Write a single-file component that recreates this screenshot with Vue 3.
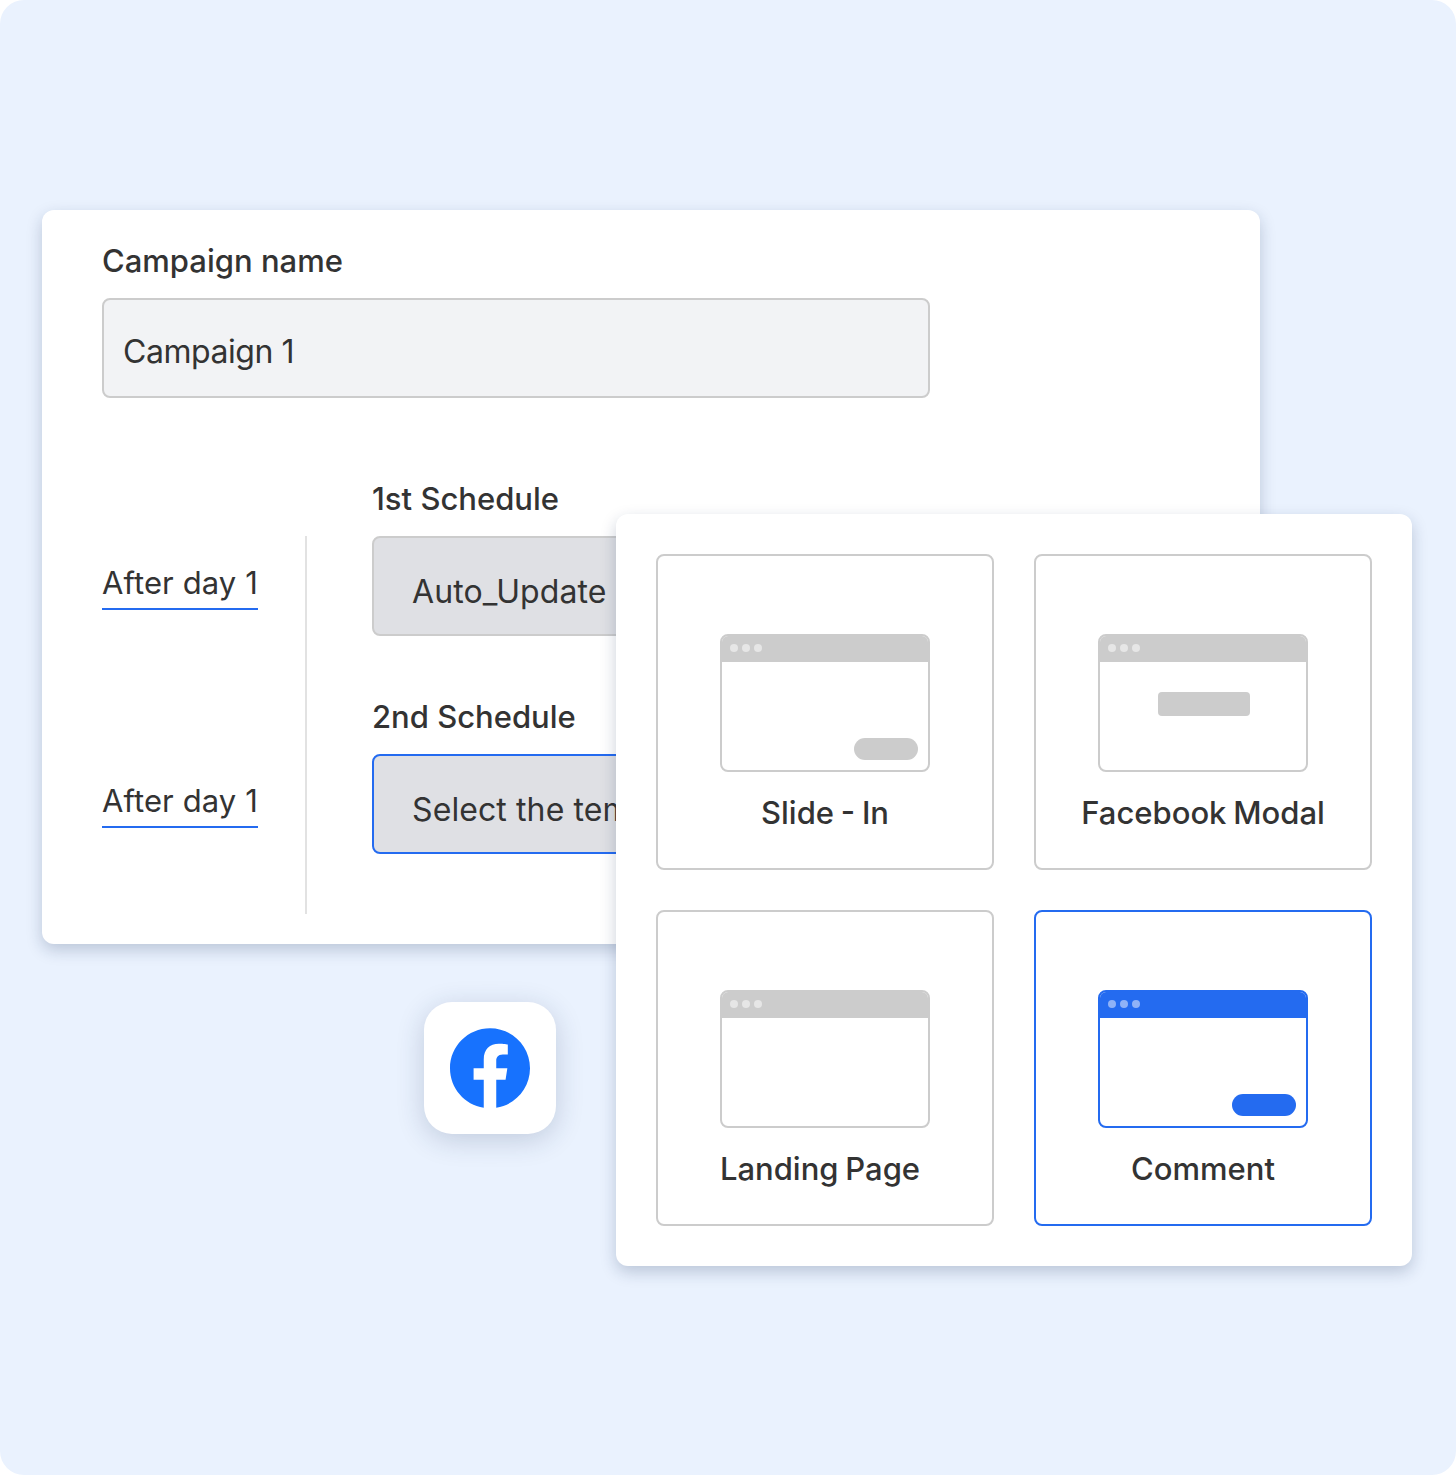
<script setup>
const schedules = [
  { id: 1, after: 'After day 1', title: '1st Schedule', value: 'Auto_Update', active: false },
  { id: 2, after: 'After day 1', title: '2nd Schedule', value: 'Select the template', active: true },
];

const types = [
  { name: 'Slide - In', kind: 'pill' },
  { name: 'Facebook Modal', kind: 'modal' },
  { name: 'Landing Page', kind: 'none', shift: true },
  { name: 'Comment', kind: 'pill', active: true },
];
</script>

<template>
  <div class="page">
    <div class="campaign">
      <div class="label">Campaign name</div>
      <div class="field field--light">Campaign 1</div>

      <div class="schedules">
        <div class="days">
          <div v-for="s in schedules" :key="s.id" class="day-row">
            <span class="day">{{ s.after }}</span>
          </div>
        </div>
        <div class="forms">
          <div v-for="s in schedules" :key="s.id" class="form">
            <div class="label">{{ s.title }}</div>
            <div class="field field--grey" :class="{ 'field--active': s.active }">{{ s.value }}</div>
          </div>
        </div>
      </div>

      <div class="types">
        <div v-for="t in types" :key="t.name" class="type" :class="{ 'type--active': t.active }">
          <div class="window">
            <div class="window__bar">
              <i></i><i></i><i></i>
            </div>
            <div class="window__body">
              <div v-if="t.kind === 'pill'" class="window__pill"></div>
              <div v-if="t.kind === 'modal'" class="window__modal"></div>
            </div>
          </div>
          <div class="type__name" :class="{ 'type__name--shift': t.shift }">{{ t.name }}</div>
        </div>
      </div>

      <div class="fb">
        <svg width="80" height="80" viewBox="0 0 24 24">
          <path fill="#1772fe" d="M24 12.073c0-6.627-5.373-12-12-12s-12 5.373-12 12c0 5.99 4.388 10.954 10.125 11.854v-8.385H7.078v-3.47h3.047V9.43c0-3.007 1.792-4.669 4.533-4.669 1.312 0 2.686.235 2.686.235v2.953H15.83c-1.491 0-1.956.925-1.956 1.874v2.25h3.328l-.532 3.47h-2.796v8.385C19.612 23.027 24 18.062 24 12.073z" />
        </svg>
      </div>
    </div>
  </div>
</template>

<style>
html, body {
  background: #fff;
}
</style>

<style scoped>
* {
  box-sizing: border-box;
}

.page {
  width: 1456px;
  height: 1475px;
  padding: 210px 0 0 42px;
  background: #eaf2fe;
  border-radius: 24px;
  font-family: Inter, "Open Sans", sans-serif;
  color: #333;
  overflow: hidden;
}

.campaign {
  position: relative;
  width: 1218px;
  height: 734px;
  padding: 32px 60px 0;
  background: #fff;
  border-radius: 12px;
  box-shadow: 0 6px 16px rgba(20, 40, 80, 0.22);
}

.label {
  height: 38px;
  font-size: 31px;
  line-height: 38px;
  font-weight: 500;
}

.field {
  height: 100px;
  margin-top: 18px;
  padding: 6px 20px 0 19px;
  display: flex;
  align-items: center;
  border: 2px solid #ccc;
  border-radius: 8px;
  font-size: 32px;
  white-space: nowrap;
  overflow: hidden;
}

.field--light {
  width: 828px;
  background: #f2f3f5;
  letter-spacing: -0.45px;
}

.field--grey {
  width: 500px;
  padding-top: 10px;
  padding-left: 38px;
  background: #dfe0e4;
  letter-spacing: 0.1px;
}

.field--active {
  border-color: #246bf0;
}

.schedules {
  display: flex;
  margin-top: 138px;
}

.days {
  width: 205px;
  height: 378px;
  padding-right: 47px;
  border-right: 2px solid #e2e2e2;
}

.day-row {
  height: 218px;
  padding-top: 26px;
}

.day {
  display: inline-block;
  height: 48px;
  font-size: 31px;
  line-height: 42px;
  letter-spacing: 0.1px;
  border-bottom: 2px solid #246bf0;
}

.forms {
  margin-left: 65px;
  margin-top: -56px;
  display: flex;
  flex-direction: column;
}

.form {
  height: 218px;
}

.types {
  position: absolute;
  left: 574px;
  top: 304px;
  width: 796px;
  height: 752px;
  padding: 40px;
  display: grid;
  grid-template-columns: 338px 338px;
  grid-template-rows: 316px 316px;
  gap: 40px;
  background: #fff;
  border-radius: 12px;
  box-shadow: 0 6px 16px rgba(20, 40, 80, 0.22);
}

.type {
  display: flex;
  flex-direction: column;
  align-items: center;
  padding-top: 78px;
  border: 2px solid #ccc;
  border-radius: 8px;
  --accent: #ccc;
  --dot: #e6e6e6;
}

.type--active {
  border-color: #246bf0;
  --accent: #246bf0;
  --dot: #8fb2f7;
}

.window {
  width: 210px;
  height: 138px;
  border: 2px solid var(--accent);
  border-radius: 8px;
  overflow: hidden;
}

.window__bar {
  height: 28px;
  margin: -2px -2px 0;
  padding: 10px 0 0 10px;
  display: flex;
  gap: 4px;
  background: var(--accent);
}

.window__bar i {
  width: 8px;
  height: 8px;
  border-radius: 50%;
  background: var(--dot);
}

.window__body {
  height: 108px;
  display: flex;
  flex-direction: column;
  align-items: center;
}

.window__pill {
  width: 64px;
  height: 22px;
  margin: 76px 10px 0 auto;
  border-radius: 11px;
  background: var(--accent);
}

.window__modal {
  width: 92px;
  height: 24px;
  margin: 30px 0 0 2px;
  border-radius: 4px;
  background: var(--accent);
}

.type__name {
  margin-top: 21px;
  font-size: 31px;
  line-height: 40px;
  font-weight: 500;
  word-spacing: -1.5px;
}

.type__name--shift {
  margin-right: 10px;
}

.fb {
  position: absolute;
  left: 382px;
  top: 792px;
  width: 132px;
  height: 132px;
  display: flex;
  align-items: center;
  justify-content: center;
  background: #fff;
  border-radius: 28px;
  box-shadow: 0 6px 28px rgba(30, 50, 90, 0.2);
}
</style>
